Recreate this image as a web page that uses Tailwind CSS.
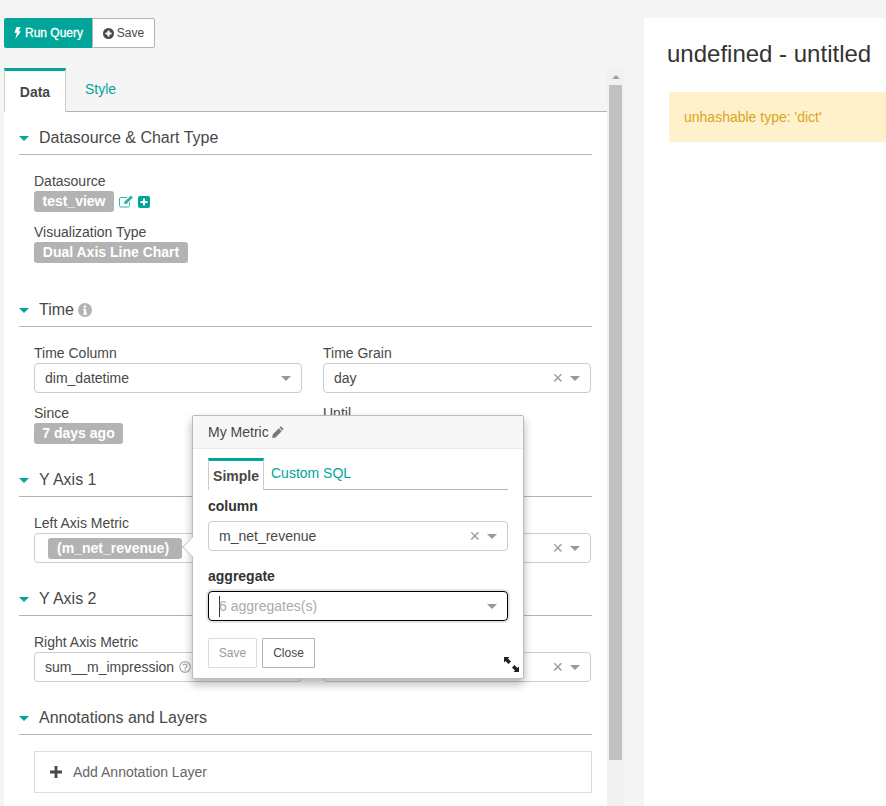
<!DOCTYPE html>
<html lang="en">
<head>
    <meta charset="UTF-8">
    <title>Explore</title>
    <script src="https://cdn.jsdelivr.net/npm/@tailwindcss/browser@4"></script>
</head>
<body class="bg-[#f5f5f5] font-['Liberation_Sans',Arial,sans-serif] text-[14px] text-[#484848]">
    <div class="relative flex h-[806px] w-[886px] overflow-hidden">
        <!-- Left column: buttons + tabs + controls -->
        <div class="w-[644px] shrink-0 pl-1 pt-[18px]">
            <div class="flex h-[30px] text-[12px]">
                <button class="flex w-[88px] items-center justify-center gap-[4px] rounded-l-[2px] bg-[#00a699] pl-[1px] font-medium text-white [-webkit-text-stroke:0.3px_#fff]">
                    <svg class="h-[12px] w-[7px]" viewBox="0 0 7 12"><path fill="#fff" d="M2.600 0h4L4.800 4.200H7L1.400 12l1.500-6.200H0.300z"/></svg>
                    <span>Run Query</span>
                </button>
                <button class="flex w-[63px] items-center justify-center gap-[3px] rounded-r-[2px] border border-[#b3b3b3] bg-white text-[#484848]">
                    <svg class="h-[11px] w-[11px]" viewBox="0 0 11 11"><circle cx="5.500" cy="5.500" r="5.500" fill="#484848"/><path stroke="#fff" stroke-width="2" d="M2.500 5.500h6M5.500 2.500v6"/></svg>
                    <span>Save</span>
                </button>
            </div>

            <div class="mt-5 flex">
                <div class="w-[603px] shrink-0">
                    <div class="flex h-[44px] border-b border-[#b3b3b3]">
                        <div class="mb-[-1px] flex w-[62px] items-center justify-center border-x border-[#ccc] border-t-[3px] border-t-[#00a699] bg-white pt-[2px] font-bold">Data</div>
                        <div class="flex w-[69px] items-center justify-center text-[#00a699]">Style</div>
                    </div>

                    <div class="h-[700px] bg-white pl-[15px]">
                        <!-- Datasource & Chart Type -->
                        <div class="w-[573px] pt-[10px]">
                            <div class="flex h-[33px] items-center border-b border-[#b3b3b3] text-[16px]">
                                <span class="mr-[10px] h-0 w-0 border-x-[5px] border-t-[5px] border-x-transparent border-t-[#00a699]"></span>
                                <span>Datasource &amp; Chart Type</span>
                            </div>
                            <div class="pl-[15px] pt-4 pb-[31px]">
                                <div class="h-5 leading-5">Datasource</div>
                                <div class="flex items-center">
                                    <span class="flex h-[21px] w-[80px] items-center justify-center rounded-[3px] bg-[#b3b3b3] font-bold text-white">test_view</span>
                                    <svg class="ml-[5px] h-[13px] w-[14px]" viewBox="0 0 14 13" fill="none" stroke="#2fb5aa"><path d="M10.500 7.500v3a1.500 1.500 0 0 1-1.500 1.500H2A1.500 1.500 0 0 1 0.500 10.500V4A1.500 1.500 0 0 1 2 2.500h6"/><path fill="#2fb5aa" stroke="none" d="M12 0.500l2 2L7.500 9H5.300V6.800z"/></svg>
                                    <svg class="ml-[5px] h-3 w-3" viewBox="0 0 12 12"><rect width="12" height="12" rx="2" fill="#00a699"/><path stroke="#fff" stroke-width="2" d="M2.500 6h7M6 2.500v7"/></svg>
                                </div>
                                <div class="mt-[10px] h-5 leading-5">Visualization Type</div>
                                <span class="flex h-[21px] w-[154px] items-center justify-center rounded-[3px] bg-[#b3b3b3] font-bold text-white">Dual Axis Line Chart</span>
                            </div>
                        </div>

                        <!-- Time -->
                        <div class="w-[573px]">
                            <div class="flex h-[33px] items-center border-b border-[#b3b3b3] text-[16px]">
                                <span class="mr-[10px] h-0 w-0 border-x-[5px] border-t-[5px] border-x-transparent border-t-[#00a699]"></span>
                                <span>Time</span>
                                <svg class="ml-[4px] h-[14px] w-[14px]" viewBox="0 0 13 13"><circle cx="6.500" cy="6.500" r="6.500" fill="#b3b3b3"/><path fill="#fff" d="M5.400 2.300h2.200v2H5.400zM4.700 5.300h2.900v4.200h0.800v1.300H4.700V9.500h0.800V6.600h-0.800z"/></svg>
                            </div>
                            <div class="grid grid-cols-[268px_268px] gap-x-[21px] pl-[15px] pt-4 pb-5">
                                <div>
                                    <div class="h-5 leading-5">Time Column</div>
                                    <div class="flex h-[30px] items-center justify-between rounded border border-[#ccc] bg-white pl-[10px] pr-[10px]">
                                        <span>dim_datetime</span>
                                        <span class="h-0 w-0 border-x-[5px] border-t-[5px] border-x-transparent border-t-[#999]"></span>
                                    </div>
                                </div>
                                <div>
                                    <div class="h-5 leading-5">Time Grain</div>
                                    <div class="flex h-[30px] items-center justify-between rounded border border-[#ccc] bg-white pl-[10px] pr-[10px]">
                                        <span>day</span>
                                        <span class="flex items-center gap-[7px]"><span class="text-[18px] leading-none text-[#999]">×</span><span class="h-0 w-0 border-x-[5px] border-t-[5px] border-x-transparent border-t-[#999]"></span></span>
                                    </div>
                                </div>
                                <div class="mt-[10px]">
                                    <div class="h-5 leading-5">Since</div>
                                    <span class="flex h-[21px] w-[89px] items-center justify-center rounded-[3px] bg-[#b3b3b3] font-bold text-white">7 days ago</span>
                                </div>
                                <div class="mt-[10px]">
                                    <div class="h-5 leading-5">Until</div>
                                </div>
                            </div>
                        </div>

                        <!-- Y Axis 1 -->
                        <div class="w-[573px]">
                            <div class="flex h-[33px] items-center border-b border-[#b3b3b3] text-[16px]">
                                <span class="mr-[10px] h-0 w-0 border-x-[5px] border-t-[5px] border-x-transparent border-t-[#00a699]"></span>
                                <span>Y Axis 1</span>
                            </div>
                            <div class="grid grid-cols-[268px_268px] gap-x-[21px] pl-[15px] pt-4 pb-5">
                                <div>
                                    <div class="h-5 leading-5">Left Axis Metric</div>
                                    <div class="flex h-[30px] items-center rounded border border-[#ccc] bg-white pl-[13px]">
                                        <span class="flex h-[21px] w-[134px] items-center rounded-[3px] bg-[#b3b3b3] pl-[9px] font-bold text-white">(m_net_revenue)</span>
                                    </div>
                                </div>
                                <div class="pt-5">
                                    <div class="flex h-[30px] items-center justify-end rounded border border-[#ccc] bg-white pr-[10px]">
                                        <span class="flex items-center gap-[7px]"><span class="text-[18px] leading-none text-[#999]">×</span><span class="h-0 w-0 border-x-[5px] border-t-[5px] border-x-transparent border-t-[#999]"></span></span>
                                    </div>
                                </div>
                            </div>
                        </div>

                        <!-- Y Axis 2 -->
                        <div class="w-[573px]">
                            <div class="flex h-[33px] items-center border-b border-[#b3b3b3] text-[16px]">
                                <span class="mr-[10px] h-0 w-0 border-x-[5px] border-t-[5px] border-x-transparent border-t-[#00a699]"></span>
                                <span>Y Axis 2</span>
                            </div>
                            <div class="grid grid-cols-[268px_268px] gap-x-[21px] pl-[15px] pt-4 pb-5">
                                <div>
                                    <div class="h-5 leading-5">Right Axis Metric</div>
                                    <div class="flex h-[30px] items-center rounded border border-[#ccc] bg-white pl-[10px]">
                                        <span>sum__m_impression</span>
                                        <svg class="ml-[5px] h-3 w-3" viewBox="0 0 12 12" fill="none"><circle cx="6" cy="6" r="5.300" stroke="#aaa" stroke-width="1.200"/><path stroke="#aaa" stroke-width="1.300" d="M4.200 4.800a1.900 1.700 0 1 1 2.800 1.500c-0.700 0.400-1 0.700-1 1.500"/><path stroke="#aaa" stroke-width="1.300" d="M6 8.500v1.300"/></svg>
                                    </div>
                                </div>
                                <div class="pt-5">
                                    <div class="flex h-[30px] items-center justify-end rounded border border-[#ccc] bg-white pr-[10px]">
                                        <span class="flex items-center gap-[7px]"><span class="text-[18px] leading-none text-[#999]">×</span><span class="h-0 w-0 border-x-[5px] border-t-[5px] border-x-transparent border-t-[#999]"></span></span>
                                    </div>
                                </div>
                            </div>
                        </div>

                        <!-- Annotations and Layers -->
                        <div class="w-[573px]">
                            <div class="flex h-[33px] items-center border-b border-[#b3b3b3] text-[16px]">
                                <span class="mr-[10px] h-0 w-0 border-x-[5px] border-t-[5px] border-x-transparent border-t-[#00a699]"></span>
                                <span>Annotations and Layers</span>
                            </div>
                            <div class="pl-[15px] pt-4">
                                <div class="flex h-[42px] items-center border border-[#ddd] pl-[15px]">
                                    <svg class="h-3 w-3" viewBox="0 0 12 12"><path stroke="#484848" stroke-width="2.800" d="M0 6h12M6 0v12"/></svg>
                                    <span class="ml-[11px] text-[#666]">Add Annotation Layer</span>
                                </div>
                            </div>
                        </div>
                    </div>
                </div>

                <!-- Scrollbar -->
                <div class="flex w-[17px] shrink-0 flex-col items-center bg-[#f1f1f1]">
                    <div class="flex h-[17px] items-center justify-center">
                        <span class="h-0 w-0 border-x-[4px] border-b-[4px] border-x-transparent border-b-[#a3a3a3]"></span>
                    </div>
                    <div class="h-[675px] w-[13px] bg-[#c1c1c1]"></div>
                </div>
            </div>
        </div>

        <!-- Right column: chart -->
        <div class="mt-[18px] flex-1 rounded-[2px] bg-white pl-[23px] pt-[21px]">
            <div class="text-[24px] leading-[30px] text-[#333]">undefined - untitled</div>
            <div class="ml-[2px] mt-[23px] flex h-[50px] items-center rounded-[2px] bg-[#fff1cc] pl-[15px] text-[#d9a520]">unhashable type: 'dict'</div>
        </div>

        <!-- Metric popover -->
        <div class="absolute left-[192px] top-[415px] h-[264px] w-[332px] rounded-[2px] border border-[#bbb] bg-white shadow-[0_5px_10px_rgba(0,0,0,0.3)]">
            <div class="absolute -left-[8px] top-[124px] h-[14px] w-[14px] rotate-45 border-b border-l border-[#ccc] bg-white"></div>
            <div class="relative flex h-[33px] items-center gap-[3px] border-b border-[#ebebeb] bg-[#f7f7f7] pl-[15px]">
                <span>My Metric</span>
                <svg class="h-3 w-3" viewBox="0 0 12 12"><path fill="#777" d="M8.800 0.300l2.900 2.900-1.300 1.300-2.900-2.900zM6.800 2.300l2.900 2.900-6.200 6.200-3.300 0.500 0.500-3.400z"/></svg>
            </div>
            <div class="relative px-[15px] pt-[9px]">
                <div class="flex h-[32px] border-b border-[#b3b3b3]">
                    <div class="mb-[-1px] flex w-[56px] items-center justify-center border-x border-[#ccc] border-t-[3px] border-t-[#00a699] bg-white pt-[2px] font-bold">Simple</div>
                    <div class="flex items-center pl-[7px] text-[#00a699]">Custom SQL</div>
                </div>
                <div class="mt-[6px] h-5 font-bold leading-5 text-[#333]">column</div>
                <div class="mt-[5px] flex h-[30px] items-center justify-between rounded border border-[#ccc] pl-[10px] pr-[10px]">
                    <span>m_net_revenue</span>
                    <span class="flex items-center gap-[7px]"><span class="text-[18px] leading-none text-[#999]">×</span><span class="h-0 w-0 border-x-[5px] border-t-[5px] border-x-transparent border-t-[#999]"></span></span>
                </div>
                <div class="mt-[15px] h-5 font-bold leading-5 text-[#333]">aggregate</div>
                <div class="mt-[5px] flex h-[30px] items-center justify-between rounded border border-black pl-[10px] pr-[10px] shadow-[0_0_0_2px_#e5e5e5]">
                    <span class="border-l border-[#333] text-[#aaa]"><span class="-ml-px">6 aggregates(s)</span></span>
                    <span class="h-0 w-0 border-x-[5px] border-t-[5px] border-x-transparent border-t-[#999]"></span>
                </div>
                <div class="mt-[17px] flex gap-[5px] text-[12px]">
                    <button class="h-[30px] w-[49px] rounded-[1px] border border-[#ddd] text-[#999]">Save</button>
                    <button class="h-[30px] w-[53px] rounded-[1px] border border-[#b3b3b3] text-[#484848]">Close</button>
                </div>
            </div>
            <svg class="absolute bottom-[6px] right-[4px] h-[15px] w-[15px]" viewBox="0 0 15 15"><path fill="#222" d="M0 0h5.500L4 1.500 7 4.500 4.500 7 1.500 4 0 5.500zM15 15H9.500L11 13.500 8 10.500 10.500 8 13.500 11 15 9.500z"/></svg>
        </div>
    </div>
</body>
</html>
